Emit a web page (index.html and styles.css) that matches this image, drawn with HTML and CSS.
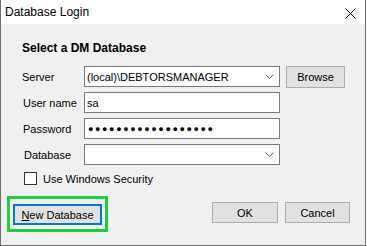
FILE: index.html
```html
<!DOCTYPE html>
<html lang="en">
<head>
    <meta charset="UTF-8">
    <title>Database Login</title>
    <link rel="stylesheet" href="styles.css">
</head>
<body>
    <div class="window">
        <div class="titlebar">
            <span class="title">Database Login</span>
            <svg class="close" width="11" height="11" viewBox="0 0 11 11">
                <path d="M0.5 0.5 L10.5 10.5 M10.5 0.5 L0.5 10.5" stroke="#000" stroke-width="1"/>
            </svg>
        </div>
        <div class="client">
            <h2 class="heading">Select a DM Database</h2>
            <div class="form">
                <label>Server</label>
                <div class="combo">
                    <span>(local)\DEBTORSMANAGER</span>
                    <svg width="9" height="5" viewBox="0 0 9 5"><path d="M0.5 0.5 L4.5 4.5 L8.5 0.5" fill="none" stroke="#606060"/></svg>
                </div>
                <button class="btn browse">Browse</button>

                <label class="indent">User name</label>
                <div class="textbox">sa</div>
                <span></span>

                <label class="indent">Password</label>
                <div class="textbox dots">&#9679;&#9679;&#9679;&#9679;&#9679;&#9679;&#9679;&#9679;&#9679;&#9679;&#9679;&#9679;&#9679;&#9679;&#9679;&#9679;&#9679;&#9679;</div>
                <span></span>

                <label class="indent2">Database</label>
                <div class="combo">
                    <span></span>
                    <svg width="9" height="5" viewBox="0 0 9 5"><path d="M0.5 0.5 L4.5 4.5 L8.5 0.5" fill="none" stroke="#606060"/></svg>
                </div>
                <span></span>
            </div>
            <div class="check-row">
                <span class="checkbox"></span>
                <span>Use Windows Security</span>
            </div>
            <div class="footer">
                <div class="highlight">
                    <button class="btn focused"><u>N</u>ew Database</button>
                </div>
                <div class="actions">
                    <button class="btn ok">OK</button>
                    <button class="btn cancel">Cancel</button>
                </div>
            </div>
        </div>
    </div>
</body>
</html>
```

FILE: styles.css
```css
body {
    margin: 0;
    background: #fff;
    font-family: "Liberation Sans", Arial, sans-serif;
    font-size: 11px;
    color: #000;
}
.window {
    width: 366px;
    height: 246px;
    box-sizing: border-box;
    border: 1px solid #6e6e6e;
    border-top: none;
    display: flex;
    flex-direction: column;
}
.titlebar {
    height: 24px;
    background: #fff;
    display: flex;
    align-items: center;
    justify-content: space-between;
    padding: 0 9px 0 4px;
}
.title {
    font-size: 12px;
}
.close {
    margin-top: 2px;
}
.client {
    flex: 1;
    background: #f0f0f0;
    padding: 18px 0 0 21px;
}
.heading {
    margin: 0;
    font-size: 12px;
    line-height: 13px;
    font-weight: bold;
}
.form {
    display: grid;
    grid-template-columns: 62px 196px 65px;
    grid-auto-rows: 21px;
    row-gap: 5px;
    margin-top: 11px;
    align-items: center;
}
.indent {
    padding-left: 1px;
}
.indent2 {
    padding-left: 2px;
}
.combo, .textbox {
    height: 21px;
    box-sizing: border-box;
    background: #fff;
    border: 1px solid #7a7a7a;
    display: flex;
    align-items: center;
    justify-content: space-between;
    padding: 0 5px 0 2px;
}
.dots {
    font-size: 9px;
    letter-spacing: 1.6px;
    padding-left: 3px;
}
.btn {
    font-family: "Liberation Sans", Arial, sans-serif;
    font-size: 11px;
    color: #000;
    background: #e1e1e1;
    border: 1px solid #adadad;
    padding: 0;
    height: 21px;
}
.browse {
    margin-left: 6px;
    width: 59px;
    height: 22px;
}
.check-row {
    display: flex;
    align-items: center;
    gap: 6px;
    margin-top: 7px;
    padding-left: 2px;
}
.checkbox {
    width: 13px;
    height: 13px;
    box-sizing: border-box;
    border: 1px solid #333;
    background: #fff;
}
.footer {
    display: flex;
    justify-content: space-between;
    margin-top: 11px;
    margin-left: -15px;
    padding-right: 15px;
}
.highlight {
    border: 3px solid #1ed03c;
    padding: 5px 3px 4px 3px;
}
.focused {
    width: 89px;
    border: 2px solid #0078d7;
}
.actions {
    display: flex;
    gap: 7px;
    margin-top: 6px;
}
.ok {
    width: 66px;
}
.cancel {
    width: 65px;
}
```
